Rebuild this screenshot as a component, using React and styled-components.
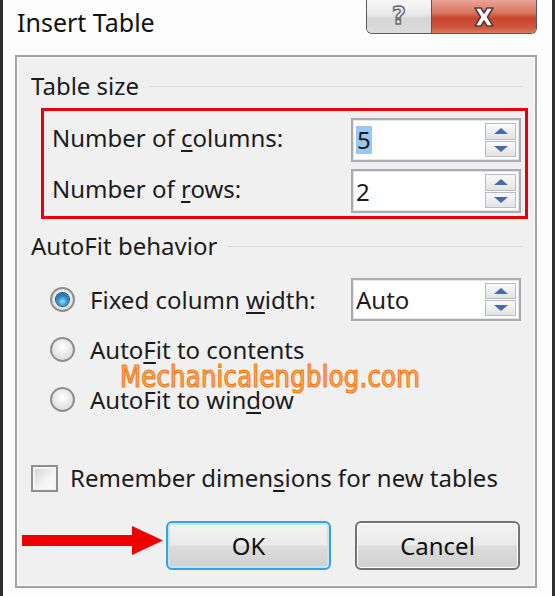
import React from "react";
import styled, { createGlobalStyle } from "styled-components";

const Global = createGlobalStyle`
  html, body { margin: 0; padding: 0; background: #ffffff; }
  body { font-family: "Noto Sans", "Open Sans", sans-serif; }
`;

const Window = styled.div`
  position: relative;
  width: 555px;
  height: 596px;
  box-sizing: border-box;
  background: #fdfdfd;
  border-left: 3px solid #2e2e2e;
  border-right: 3px solid #2e2e2e;
  display: flex;
  flex-direction: column;
  font-family: "Noto Sans", "Open Sans", sans-serif;
  color: #1c1c1c;
  overflow: hidden;
`;

const TitleBar = styled.div`
  height: 55px;
  display: flex;
  align-items: flex-start;
  justify-content: space-between;
  padding: 0 15px 0 14px;
  flex-shrink: 0;
`;

const Title = styled.div`
  margin-top: 6px;
  font-size: 25px;
  line-height: 32px;
  color: #111;
`;

const CaptionButtons = styled.div`
  display: flex;
  height: 33px;
  border: 1px solid #5a5a5a;
  border-top: none;
  border-radius: 0 0 6px 6px;
  overflow: hidden;
  box-shadow: 0 1px 0 rgba(255, 255, 255, 0.8);
`;

const CaptionButton = styled.div`
  width: ${(p) => p.$w}px;
  height: 100%;
  display: flex;
  align-items: center;
  justify-content: center;
  box-sizing: border-box;
  background: ${(p) =>
    p.$close
      ? "linear-gradient(#e7a496 0%, #d9745f 40%, #c8432b 55%, #cf5a3f 85%, #dc7a62 100%)"
      : "linear-gradient(#f7f7f7 0%, #e9e9e9 45%, #d6d6d6 55%, #dcdcdc 100%)"};
  border-left: ${(p) => (p.$close ? "1px solid #7a4a40" : "none")};
`;

const HelpGlyph = styled.span`
  font-family: "DejaVu Sans", sans-serif;
  font-weight: bold;
  font-size: 24px;
  line-height: 1;
  color: #e8e8e8;
  -webkit-text-stroke: 1.4px #6a6a6a;
  margin-top: -2px;
`;

const Panel = styled.div`
  margin: 0 15px 8px 12px;
  border: 2px solid #a3a3a3;
  box-shadow: inset 0 0 0 1px #fbfbfb;
  background: #f0f0f0;
  display: flex;
  flex-direction: column;
  padding: 13px 0 0 0;
  flex: 1;
`;

const GroupHeader = styled.div`
  display: flex;
  align-items: center;
  padding: 0 13px 0 14px;
  margin-top: ${(p) => p.$mt || 0}px;
  font-size: 24px;
  line-height: 32px;
  &::after {
    content: "";
    flex: 1;
    height: 1px;
    background: #d3dbe0;
    margin-left: 11px;
    margin-top: 1px;
  }
`;

const Highlight = styled.div`
  margin: 6px 7px 0 24px;
  border: 3px solid #e3000f;
  padding: 7px 4px 3px 8px;
  display: grid;
  grid-template-columns: 299px 170px;
  row-gap: 7px;
  align-items: center;
`;

const Label = styled.span`
  font-size: 24px;
  line-height: 32px;
  white-space: nowrap;
  position: relative;
  top: ${(p) => (p.$lift ? -2 : 0)}px;
`;

const U = styled.span`
  text-decoration: underline;
  text-underline-offset: 3px;
  text-decoration-thickness: 1.5px;
`;

const Spinner = styled.div`
  height: ${(p) => p.$h || 44}px;
  width: 170px;
  box-sizing: border-box;
  border: 2px solid #a9abaf;
  box-shadow: inset 0 0 0 1px #e3e5e8;
  background: #fff;
  display: flex;
  align-items: stretch;
`;

const SpinValue = styled.div`
  flex: 1;
  display: flex;
  align-items: center;
  padding-left: 3px;
  font-size: 24px;
`;

const Selected = styled.span`
  background: #99c9f3;
  line-height: 28px;
  padding: 0 1px;
`;

const SpinButtons = styled.div`
  width: 31px;
  margin: 3px 3px 3px 0;
  display: flex;
  flex-direction: column;
  gap: 1px;
`;

const SpinButton = styled.div`
  flex: 1;
  box-sizing: border-box;
  border: 1px solid #b9bcc1;
  background: linear-gradient(#fafafa, #e2e3e6);
  display: flex;
  align-items: center;
  justify-content: center;
  &::before {
    content: "";
    width: 0;
    height: 0;
    border-left: 7px solid transparent;
    border-right: 7px solid transparent;
    ${(p) =>
      p.$down
        ? "border-top: 6px solid #4a69ad;"
        : "border-bottom: 6px solid #4a69ad;"}
  }
`;

const RadioRow = styled.div`
  display: grid;
  grid-template-columns: 301px 170px;
  align-items: center;
  height: 43px;
  padding-left: 33px;
  margin-top: ${(p) => p.$mt || 0}px;
`;

const RadioLabel = styled.div`
  display: flex;
  align-items: center;
  gap: 15px;
`;

const Radio = styled.span`
  width: 25px;
  height: 25px;
  border-radius: 50%;
  box-sizing: border-box;
  border: 2px solid #8e8f8f;
  background: radial-gradient(circle at 50% 40%, #ffffff 0%, #e4e4e4 60%, #cfcfcf 100%);
  display: flex;
  align-items: center;
  justify-content: center;
  flex-shrink: 0;
  &::after {
    content: "";
    display: ${(p) => (p.$checked ? "block" : "none")};
    width: 13px;
    height: 13px;
    border-radius: 50%;
    background: radial-gradient(circle at 50% 65%, #8ee1ff 0%, #2b8fd0 45%, #0e4f86 100%);
    box-shadow: 0 0 0 1px #1b4d74;
  }
`;

const CheckRow = styled.div`
  display: flex;
  align-items: center;
  gap: 12px;
  padding-left: 14px;
  height: 32px;
  margin-top: 41px;
`;

const Checkbox = styled.span`
  width: 27px;
  height: 27px;
  box-sizing: border-box;
  border: 2px solid #8f8f8f;
  background: linear-gradient(135deg, #d2d2d2 0%, #f4f4f4 60%, #ffffff 100%);
  box-shadow: inset 0 0 0 2px #f4f4f4;
  flex-shrink: 0;
`;

const ButtonRow = styled.div`
  display: flex;
  justify-content: flex-end;
  gap: 24px;
  padding-right: 15px;
  margin-top: 27px;
`;

const Button = styled.div`
  width: 165px;
  height: 49px;
  box-sizing: border-box;
  border-radius: 6px;
  border: 2px solid ${(p) => (p.$focus ? "#3aa1da" : "#737373")};
  box-shadow: ${(p) =>
    p.$focus ? "inset 0 0 0 2px #bfe6f8" : "inset 0 0 0 1px #fcfcfc"};
  background: linear-gradient(#f3f3f3 0%, #ebebeb 48%, #dcdcdc 52%, #d0d0d0 100%);
  display: flex;
  align-items: center;
  justify-content: center;
  font-size: 24px;
  color: #111;
`;

const Watermark = styled.div`
  position: absolute;
  left: 117px;
  top: 360px;
  font-family: "Liberation Sans Narrow", "DejaVu Sans Condensed", sans-serif;
  font-stretch: condensed;
  font-size: 30px;
  line-height: 34px;
  letter-spacing: 0.3px;
  color: #fbb06a;
  -webkit-text-stroke: 1.2px #f07d18;
  text-shadow: 0 0 2px rgba(255, 255, 255, 0.9);
  transform: scaleX(0.9);
  transform-origin: left center;
  white-space: nowrap;
  pointer-events: none;
`;

const Arrow = styled.svg`
  position: absolute;
  left: 19px;
  top: 526px;
`;

export default function App() {
  return (
    <>
      <Global />
      <Window>
        <TitleBar>
          <Title>Insert Table</Title>
          <CaptionButtons>
            <CaptionButton $w={64}>
              <HelpGlyph>?</HelpGlyph>
            </CaptionButton>
            <CaptionButton $w={105} $close>
              <svg width="30" height="24" viewBox="0 0 30 24">
                <path
                  d="M6 3 L12 3 L15 8 L18 3 L24 3 L18.5 12 L24 21 L18 21 L15 16 L12 21 L6 21 L11.5 12 Z"
                  fill="#ffffff"
                  stroke="#5b3a34"
                  strokeWidth="1.6"
                  strokeLinejoin="round"
                />
              </svg>
            </CaptionButton>
          </CaptionButtons>
        </TitleBar>

        <Panel>
          <GroupHeader>Table size</GroupHeader>
          <Highlight>
            <Label $lift>
              Number of <U>c</U>olumns:
            </Label>
            <Spinner>
              <SpinValue>
                <Selected>5</Selected>
              </SpinValue>
              <SpinButtons>
                <SpinButton />
                <SpinButton $down />
              </SpinButtons>
            </Spinner>
            <Label $lift>
              Number of <U>r</U>ows:
            </Label>
            <Spinner>
              <SpinValue>2</SpinValue>
              <SpinButtons>
                <SpinButton />
                <SpinButton $down />
              </SpinButtons>
            </Spinner>
          </Highlight>

          <GroupHeader $mt={11}>AutoFit behavior</GroupHeader>
          <RadioRow $mt={16}>
            <RadioLabel>
              <Radio $checked />
              <Label>
                Fixed column <U>w</U>idth:
              </Label>
            </RadioLabel>
            <Spinner $h={43}>
              <SpinValue>Auto</SpinValue>
              <SpinButtons>
                <SpinButton />
                <SpinButton $down />
              </SpinButtons>
            </Spinner>
          </RadioRow>
          <RadioRow $mt={7}>
            <RadioLabel>
              <Radio />
              <Label>
                Auto<U>F</U>it to contents
              </Label>
            </RadioLabel>
          </RadioRow>
          <RadioRow $mt={7}>
            <RadioLabel>
              <Radio />
              <Label>
                AutoFit to win<U>d</U>ow
              </Label>
            </RadioLabel>
          </RadioRow>

          <CheckRow>
            <Checkbox />
            <Label>
              Remember dimen<U>s</U>ions for new tables
            </Label>
          </CheckRow>

          <ButtonRow>
            <Button $focus>OK</Button>
            <Button>Cancel</Button>
          </ButtonRow>
        </Panel>

        <Watermark>Mechanicalengblog.com</Watermark>

        <Arrow width="141" height="29" viewBox="0 0 141 29">
          <path d="M0 9 L110 9 L110 0 L141 14.5 L110 29 L110 20 L0 20 Z" fill="#ee0000" />
        </Arrow>
      </Window>
    </>
  );
}
